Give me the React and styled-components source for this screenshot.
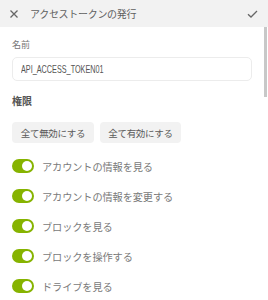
import React, { useState } from 'react';
import styled, { createGlobalStyle } from 'styled-components';

const GlobalStyle = createGlobalStyle`
  html, body {
    margin: 0;
    padding: 0;
    background: #fff;
    overflow: hidden;
  }
  body {
    font-family: "Noto Sans CJK JP", "Noto Sans", sans-serif;
  }
`;

const Window = styled.div`
  width: 268px;
  height: 300px;
  position: relative;
  overflow: hidden;
  background: #fff;
`;

const Header = styled.div`
  height: 27px;
  background: #f2f2f2;
  display: flex;
  align-items: center;
  padding: 0 9px 0 7px;
  color: #5f5f5f;
`;

const IconButton = styled.button`
  border: 0;
  background: none;
  padding: 0;
  width: 14px;
  height: 14px;
  display: flex;
  align-items: center;
  justify-content: center;
  color: #666;
`;

const Title = styled.div`
  flex: 1;
  margin-left: 9px;
  font-size: 10px;
  letter-spacing: -0.3px;
`;

const Body = styled.div`
  padding: 12px 12px 0 12px;
`;

const FieldLabel = styled.div`
  font-size: 9px;
  color: #777;
  line-height: 12px;
  margin-bottom: 6px;
`;

const Field = styled.div`
  box-sizing: border-box;
  width: 240px;
  height: 24px;
  border: 1px solid #ececec;
  border-radius: 5px;
  padding: 0 8px;
  display: flex;
  align-items: center;
`;

const FieldText = styled.span`
  display: inline-block;
  font-family: "Liberation Sans", Arial, sans-serif;
  font-size: 11px;
  color: #555;
  transform: scaleX(0.66);
  transform-origin: left center;
  white-space: nowrap;
`;

const SectionTitle = styled.div`
  margin-top: 13px;
  font-size: 10px;
  font-weight: bold;
  color: #555;
  line-height: 14px;
`;

const ButtonRow = styled.div`
  display: flex;
  gap: 6px;
  margin-top: 14px;
`;

const Button = styled.button`
  height: 21px;
  width: ${(p) => p.w}px;
  border: 0;
  border-radius: 4px;
  background: #f2f2f2;
  color: #5a5a5a;
  font-family: inherit;
  font-size: 9.5px;
  letter-spacing: -0.3px;
  padding: 0;
`;

const List = styled.div`
  display: flex;
  flex-direction: column;
  margin-top: 8px;
`;

const Row = styled.label`
  height: 30px;
  display: flex;
  align-items: center;
  gap: 8px;
`;

const Track = styled.span`
  width: 22px;
  height: 14px;
  border-radius: 7px;
  background: ${(p) => (p.on ? '#86b300' : '#ccc')};
  position: relative;
  flex-shrink: 0;
`;

const Knob = styled.span`
  position: absolute;
  top: 2px;
  left: ${(p) => (p.on ? '10px' : '2px')};
  width: 10px;
  height: 10px;
  border-radius: 50%;
  background: #fff;
`;

const RowText = styled.span`
  font-size: 10.2px;
  color: #7a7a7a;
  letter-spacing: -0.1px;
`;

const Scrollbar = styled.div`
  position: absolute;
  right: 1px;
  top: 27px;
  width: 3px;
  height: 70px;
  background: #c8c8c8;
`;

const perms = [
  'アカウントの情報を見る',
  'アカウントの情報を変更する',
  'ブロックを見る',
  'ブロックを操作する',
  'ドライブを見る',
];

export default function App() {
  const [on, setOn] = useState(perms.map(() => true));

  return (
    <Window>
      <GlobalStyle />
      <Header>
        <IconButton>
          <svg width="10" height="10" viewBox="0 0 10 10">
            <path d="M1.5 1.5 L8.5 8.5 M8.5 1.5 L1.5 8.5" stroke="#666" strokeWidth="1.3" />
          </svg>
        </IconButton>
        <Title>アクセストークンの発行</Title>
        <IconButton>
          <svg width="11" height="10" viewBox="0 0 11 10">
            <path d="M1 5.2 L4 8 L10 2" stroke="#666" strokeWidth="1.3" fill="none" />
          </svg>
        </IconButton>
      </Header>
      <Body>
        <FieldLabel>名前</FieldLabel>
        <Field>
          <FieldText>API_ACCESS_TOKEN01</FieldText>
        </Field>
        <SectionTitle>権限</SectionTitle>
        <ButtonRow>
          <Button w={82} onClick={() => setOn(perms.map(() => false))}>全て無効にする</Button>
          <Button w={81} onClick={() => setOn(perms.map(() => true))}>全て有効にする</Button>
        </ButtonRow>
        <List>
          {perms.map((p, i) => (
            <Row key={p} onClick={() => setOn(on.map((v, j) => (j === i ? !v : v)))}>
              <Track on={on[i]}>
                <Knob on={on[i]} />
              </Track>
              <RowText>{p}</RowText>
            </Row>
          ))}
        </List>
      </Body>
      <Scrollbar />
    </Window>
  );
}
